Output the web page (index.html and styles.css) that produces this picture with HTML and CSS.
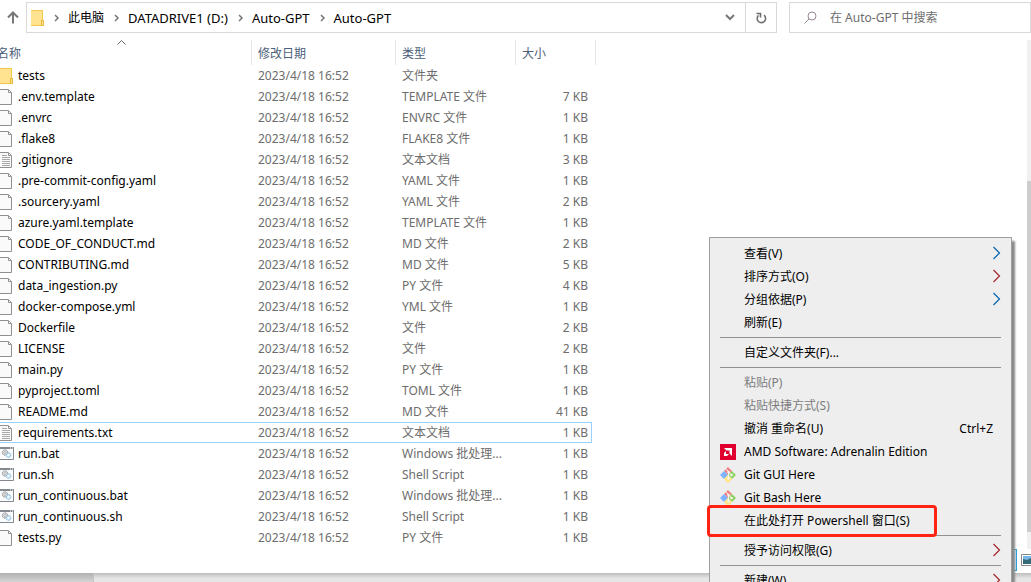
FILE: index.html
```html
<!DOCTYPE html>
<html lang="zh-CN">
<head>
  <meta charset="UTF-8">
  <meta name="viewport" content="width=device-width, initial-scale=1.0">
  <title>Auto-GPT</title>
  <link rel="stylesheet" href="styles.css">
</head>
<body>
  <!-- 图标 -->
  <svg class="sprite" width="0" height="0" aria-hidden="true">
    <symbol id="i-folder" viewBox="0 0 13 16">
      <path d="M0 0H12V16H0z" fill="#f2c94c"/>
      <path d="M0 1H11V15H0z" fill="#ffe391"/>
      <path d="M10 10H13V16H10z" fill="#e9bb3c"/>
      <path d="M11 11H12V15H11z" fill="#ffe391"/>
    </symbol>
    <symbol id="i-file" viewBox="0 0 13 16">
      <path d="M-1 .5H8.500L11.500 3.500V15.500H-1z" fill="#fafafa" stroke="#909090"/>
      <path d="M8.500 1V3.500H11" fill="#fff" stroke="#909090"/>
    </symbol>
    <symbol id="i-text" viewBox="0 0 13 16">
      <path d="M-1 .5H8.500L11.500 3.500V15.500H-1z" fill="#fafafa" stroke="#909090"/>
      <path d="M8.500 1V3.500H11" fill="#fff" stroke="#909090"/>
      <path d="M2 3.500H7M2 5.500H10M2 7.500H10M2 9.500H10M2 11.500H10M2 13.500H10" stroke="#a8a8a8"/>
    </symbol>
    <symbol id="i-script" viewBox="0 0 14 16">
      <path d="M-1 2H13.500V13.500H-1" fill="#fafbfc" stroke="#84898f"/>
      <path d="M0 2H14" stroke="#84898f" stroke-width="2"/>
      <path d="M10 2H11M12 2H13" stroke="#fff"/>
      <circle cx="5" cy="6.500" r="2.700" fill="#ddd" stroke="#8e9296" stroke-dasharray="1.500 .6"/>
      <circle cx="5" cy="6.500" r="1" fill="#fff" stroke="#999" stroke-width=".6"/>
      <circle cx="8.500" cy="9" r="2.300" fill="#d8efff" stroke="#76add0" stroke-dasharray="1.500 .6"/>
      <circle cx="8.500" cy="9" r=".8" fill="#fff"/>
    </symbol>
    <symbol id="i-next" viewBox="0 0 8 14">
      <path d="M.5 1L6.500 7L.5 13" fill="none" stroke="currentColor" stroke-width="1.200"/>
    </symbol>
    <symbol id="i-crumb" viewBox="0 0 6 8">
      <path d="M1 1L4 4L1 7" fill="none" stroke="#777" stroke-width="1.500"/>
    </symbol>
    <symbol id="i-git" viewBox="0 0 16 16">
      <path d="M8 0L12 4L8 8L4 4z" fill="#f08080"/>
      <path d="M4 4L8 8L4 12L0 8z" fill="#80b3ff"/>
      <path d="M12 4L16 8L12 12L8 8z" fill="#8dd35f"/>
      <path d="M8 8L12 12L8 16L4 12z" fill="#ffe680"/>
      <path d="M5.500 1.500L8.500 4.500V11.500M8.500 5L11.500 8" fill="none" stroke="#f4f4f4"/>
      <circle cx="8.500" cy="5" r="1.300" fill="#f4f4f4"/>
      <circle cx="11.500" cy="8" r="1.300" fill="#f4f4f4"/>
      <circle cx="8.500" cy="11.500" r="1.300" fill="#f4f4f4"/>
    </symbol>
  </svg>

  <div class="window">
    <header class="toolbar">
      <button class="up" aria-label="上移">
        <svg width="12" height="13" viewBox="0 0 12 13"><path d="M6 12.500V2M1 6.500L6 1.500L11 6.500" fill="none" stroke="#777" stroke-width="2"/></svg>
      </button>
      <nav class="address">
        <svg class="folder" width="13" height="16"><use href="#i-folder"/></svg>
        <svg class="crumb" width="6" height="8"><use href="#i-crumb"/></svg>
        <a href="#" lang="zh-CN">此电脑</a>
        <svg class="crumb" width="6" height="8"><use href="#i-crumb"/></svg>
        <a class="path" href="#">DATADRIVE1 (D:)</a>
        <svg class="crumb" width="6" height="8"><use href="#i-crumb"/></svg>
        <a class="path" href="#">Auto-GPT</a>
        <svg class="crumb" width="6" height="8"><use href="#i-crumb"/></svg>
        <a class="path" href="#">Auto-GPT</a>
        <button class="history" aria-label="以前的位置">
          <svg width="10" height="7" viewBox="0 0 10 7"><path d="M1 1L5 5L9 1" fill="none" stroke="#777" stroke-width="2"/></svg>
        </button>
        <button class="refresh" aria-label="刷新">
          <svg width="12" height="12" viewBox="0 0 12 12"><path d="M9 3.200A4.200 4.200 0 1 1 3.500 3.400M1.500 1.500H5.500V5.500" fill="none" stroke="#707070" stroke-width="1.600"/></svg>
        </button>
      </nav>
      <label class="search">
        <svg width="13" height="13" viewBox="0 0 13 13"><circle cx="8" cy="5" r="4" fill="none" stroke="#9a8a95"/><path d="M5 8L.5 12.500" stroke="#9a8a95"/></svg>
        <input type="text" placeholder="在 Auto-GPT 中搜索" aria-label="搜索">
      </label>
    </header>

    <main class="content">
      <table class="files">
        <colgroup><col class="c-name"><col class="c-date"><col class="c-type"><col class="c-size"></colgroup>
        <thead>
          <tr>
            <th class="name">名称
              <svg class="sort" width="9" height="5" viewBox="0 0 9 5"><path d="M.5 4.500L4.500 .5L8.500 4.500" fill="none" stroke="#666"/></svg>
            </th>
            <th>修改日期</th>
            <th>类型</th>
            <th>大小</th>
          </tr>
        </thead>
        <tbody id="list"></tbody>
      </table>
      <div class="scrollbar"><div class="thumb"></div></div>
    </main>

    <footer class="status">
      <span class="view details"><svg width="14" height="14" viewBox="0 0 14 14"><path d="M0 1.500H14M0 5.500H14M0 9.500H14M0 13.500H14" stroke="#4a6377"/></svg></span>
      <span class="view"><svg width="16" height="12" viewBox="0 0 16 12"><path d="M.5 .5H15.500V11.500H.5z" fill="#fff" stroke="#888"/><path d="M2 2H14V6H2z" fill="#79b7e8"/><path d="M2 5L6 6L10 4L14 6V10H2z" fill="#356b77"/></svg></span>
    </footer>
  </div>
  <div class="behind"><div></div></div>

  <ul class="menu">
    <li><button>查看(V)<svg class="next" width="8" height="14"><use href="#i-next"/></svg></button></li>
    <li><button>排序方式(O)<svg class="next red" width="8" height="14"><use href="#i-next"/></svg></button></li>
    <li><button>分组依据(P)<svg class="next" width="8" height="14"><use href="#i-next"/></svg></button></li>
    <li><button>刷新(E)</button></li>
    <li class="line"></li>
    <li><button>自定义文件夹(F)...</button></li>
    <li class="line"></li>
    <li><button disabled>粘贴(P)</button></li>
    <li><button disabled>粘贴快捷方式(S)</button></li>
    <li><button>撤消 重命名(U)<span class="key">Ctrl+Z</span></button></li>
    <li><button>
      <svg class="icon" width="16" height="16" viewBox="0 0 16 16"><path d="M0 0H16V16H0z" fill="#e0002f"/><path d="M4 4H12V12L9.500 9.500V6.500H6.500z" fill="#fff"/><path d="M6 7V10H9L7 12H4V9z" fill="#fff"/></svg>
      AMD Software: Adrenalin Edition</button></li>
    <li><button><svg class="icon" width="16" height="16"><use href="#i-git"/></svg>Git GUI Here</button></li>
    <li><button><svg class="icon" width="16" height="16"><use href="#i-git"/></svg>Git Bash Here</button></li>
    <li class="marked"><button>在此处打开 Powershell 窗口(S)</button></li>
    <li class="line"></li>
    <li><button>授予访问权限(G)<svg class="next red" width="8" height="14"><use href="#i-next"/></svg></button></li>
    <li class="line"></li>
    <li><button>新建(W)<svg class="next red" width="8" height="14"><use href="#i-next"/></svg></button></li>
  </ul>

  <script src="script.js"></script>
</body>
</html>
```
FILE: styles.css
```css
*, *::after {margin: 0; padding: 0; box-sizing: border-box;}

ul, li {
  list-style: none;
}
body {
  display: flex;
  flex-direction: column;
  height: 100vh;
  overflow: hidden;
  background-color: #fff;
  color: #000;
  font: 12px/20px "Noto Sans", "Noto Sans CJK SC", sans-serif;
}
button, input {
  border: 0;
  background: none;
  color: inherit;
  font: inherit;
}
a {
  color: inherit;
  text-decoration: none;
}
svg {
  display: block;
  flex: none;
}
.sprite {
  position: absolute;
}

.window {
  display: flex;
  flex-direction: column;
  flex: 1;
  min-height: 0;
}

/* 地址栏 */
.toolbar {
  display: flex;
  padding-top: 2px;
  height: 40px;
}
.up {
  display: flex;
  align-items: center;
  width: 26px;
  height: 31px;
  padding-left: 7px;
}
.address {
  display: flex;
  align-items: center;
  flex: 1;
  height: 31px;
  padding-left: 4px;
  border: 1px solid #d9d9d9;
}
.crumb {
  margin: 0 8px 0 10px;
}
.path {
  font-size: 13px;
}
.history {
  display: flex;
  justify-content: center;
  width: 30px;
  margin-left: auto;
}
.refresh {
  display: flex;
  align-items: center;
  justify-content: center;
  align-self: stretch;
  width: 31px;
  border-left: 1px solid #d9d9d9;
}
.search {
  display: flex;
  align-items: center;
  gap: 13px;
  width: 242px;
  height: 31px;
  margin-left: 12px;
  padding-left: 14px;
  border: 1px solid #d9d9d9;
}
.search input {
  flex: 1;
  min-width: 0;
  outline: 0;
}
.search input::placeholder {
  color: #6d6d6d;
  opacity: 1;
}

/* 文件列表 */
.content {
  display: flex;
  justify-content: space-between;
  align-items: flex-start;
  flex: 1;
  min-height: 0;
}
.files {
  table-layout: fixed;
  width: 596px;
  border-spacing: 0;
  color: #6d6d6d;
}
.c-name {
  width: 252px;
}
.c-date {
  width: 144px;
}
.c-type {
  width: 120px;
}
.c-size {
  width: 80px;
}
th {
  position: relative;
  height: 25px;
  padding-top: 2px;
  padding-left: 6px;
  border-right: 1px solid #e5e5e5;
  color: #4c607a;
  font-weight: normal;
  text-align: left;
}
th.name {
  padding-left: 0;
  text-indent: -3px;
}
.sort {
  position: absolute;
  top: 0;
  left: 117px;
}
td {
  height: 21px;
  padding-left: 6px;
  white-space: nowrap;
}
td:first-child {
  padding-left: 0;
}
td:last-child {
  padding-right: 8px;
  text-align: right;
}
.file {
  display: flex;
  align-items: center;
  color: #000;
}
.file span {
  display: flex;
  width: 18px;
}
.selected td {
  border: solid #99d1ff;
  border-width: 1px 0;
  line-height: 19px;
}
.selected td:last-child {
  position: relative;
  border: 0;
}
.selected td:last-child::after {
  content: "";
  position: absolute;
  inset: 0 4px 0 0;
  border: 1px solid #99d1ff;
  border-left: 0;
}
.scrollbar {
  align-self: stretch;
  width: 4px;
  padding-top: 141px;
  padding-bottom: 17px;
  background-color: #f0f0f0;
}
.thumb {
  height: 100%;
  background-color: #cdcdcd;
}

/* 状态栏 */
.status {
  display: flex;
  justify-content: flex-end;
  height: 24px;
}
.view {
  display: flex;
  align-items: center;
  width: 10px;
  height: 22px;
  overflow: hidden;
}
.details {
  justify-content: flex-end;
  width: 22px;
  margin-right: 4px;
  padding-right: 2px;
  border: 1px solid #26a0da;
  background-color: #cbe8f6;
}
.behind {
  height: 9px;
  background: linear-gradient(#bdbdbd, #e6e6e6 60%);
}
.behind div {
  width: 94px;
  height: 9px;
  border-right: 1px solid #c4c4c4;
  background: linear-gradient(#b0b0b0, #d4d4d4);
}

/* 右键菜单 */
.menu {
  position: absolute;
  top: 237px;
  right: 19px;
  width: 303px;
  padding: 4px 2px;
  border: 1px solid #a0a0a0;
  background-color: #eee;
  box-shadow: 3px 4px 2px #888;
}
.menu button {
  display: flex;
  align-items: center;
  position: relative;
  width: 100%;
  height: 23px;
  padding: 0 8px 0 32px;
  white-space: nowrap;
}
.menu button:disabled {
  color: #7d7d7d;
}
.icon {
  position: absolute;
  left: 8px;
}
.next {
  margin-left: auto;
  margin-bottom: 2px;
  color: #0063b1;
}
.red {
  color: #a4262c;
}
.key {
  margin-left: auto;
  padding-right: 8px;
}
.line {
  height: 1px;
  margin: 3px 8px;
  background-color: #919191;
}
.marked {
  position: relative;
}
.marked::after {
  content: "";
  position: absolute;
  top: -4px;
  left: -5px;
  width: 230px;
  height: 32px;
  border: 3px solid #ff2314;
  border-radius: 4px;
  z-index: 1;
}
```
FILE: script.js
```javascript
// [图标, 名称, 类型, 大小]
const files = [
  ['folder', 'tests', '文件夹', ''],
  ['file', '.env.template', 'TEMPLATE 文件', '7 KB'],
  ['file', '.envrc', 'ENVRC 文件', '1 KB'],
  ['file', '.flake8', 'FLAKE8 文件', '1 KB'],
  ['text', '.gitignore', '文本文档', '3 KB'],
  ['file', '.pre-commit-config.yaml', 'YAML 文件', '1 KB'],
  ['file', '.sourcery.yaml', 'YAML 文件', '2 KB'],
  ['file', 'azure.yaml.template', 'TEMPLATE 文件', '1 KB'],
  ['file', 'CODE_OF_CONDUCT.md', 'MD 文件', '2 KB'],
  ['file', 'CONTRIBUTING.md', 'MD 文件', '5 KB'],
  ['file', 'data_ingestion.py', 'PY 文件', '4 KB'],
  ['file', 'docker-compose.yml', 'YML 文件', '1 KB'],
  ['file', 'Dockerfile', '文件', '2 KB'],
  ['file', 'LICENSE', '文件', '2 KB'],
  ['file', 'main.py', 'PY 文件', '1 KB'],
  ['file', 'pyproject.toml', 'TOML 文件', '1 KB'],
  ['file', 'README.md', 'MD 文件', '41 KB'],
  ['text', 'requirements.txt', '文本文档', '1 KB'],
  ['script', 'run.bat', 'Windows 批处理...', '1 KB'],
  ['script', 'run.sh', 'Shell Script', '1 KB'],
  ['script', 'run_continuous.bat', 'Windows 批处理...', '1 KB'],
  ['script', 'run_continuous.sh', 'Shell Script', '1 KB'],
  ['file', 'tests.py', 'PY 文件', '1 KB']
];
const list = document.querySelector('#list');

for(let i = 0; i < files.length; i++){
  const [icon, name, type, size] = files[i];
  const width = icon === 'script' ? 14 : 13;
  const row = document.createElement('tr');
  if(name === 'requirements.txt') row.className = 'selected';
  row.innerHTML = `
    <td><a class="file" href="#"><span><svg width="${width}" height="16"><use href="#i-${icon}"/></svg></span>${name}</a></td>
    <td>2023/4/18 16:52</td>
    <td>${type}</td>
    <td>${size}</td>`;
  list.appendChild(row);
}
```
